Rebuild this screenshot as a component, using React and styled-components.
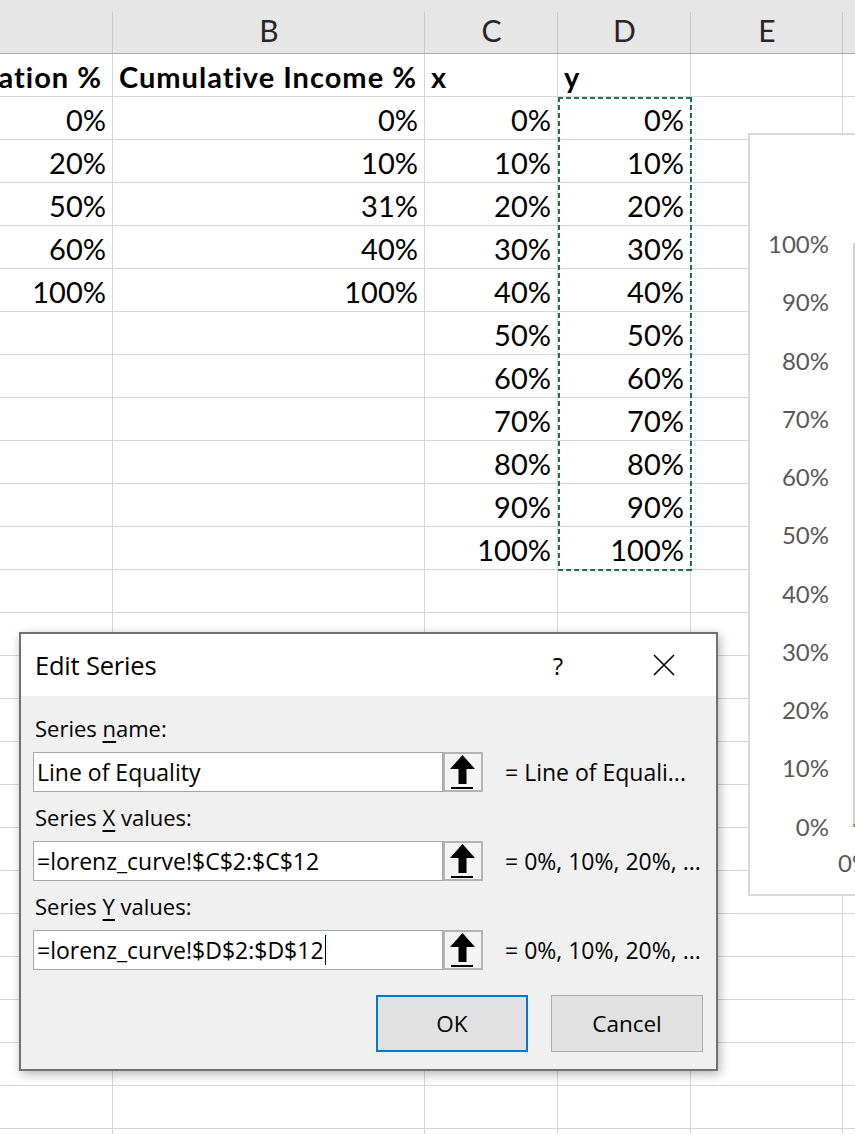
import React from 'react';
import styled, { createGlobalStyle } from 'styled-components';

const GlobalStyle = createGlobalStyle`
  html, body {
    margin: 0;
    padding: 0;
    overflow: hidden;
    background: #fff;
  }
`;

const columns = ['', 'B', 'C', 'D', 'E', ''];

const rows = [
  { bold: true, cells: ['Cumulative Population %', 'Cumulative Income %', 'x', 'y'] },
  { cells: ['0%', '0%', '0%', '0%'] },
  { cells: ['20%', '10%', '10%', '10%'] },
  { cells: ['50%', '31%', '20%', '20%'] },
  { cells: ['60%', '40%', '30%', '30%'] },
  { cells: ['100%', '100%', '40%', '40%'] },
  { cells: ['', '', '50%', '50%'] },
  { cells: ['', '', '60%', '60%'] },
  { cells: ['', '', '70%', '70%'] },
  { cells: ['', '', '80%', '80%'] },
  { cells: ['', '', '90%', '90%'] },
  { cells: ['', '', '100%', '100%'] },
];

const TOTAL_ROWS = 26;

const yLabels = ['100%', '90%', '80%', '70%', '60%', '50%', '40%', '30%', '20%', '10%', '0%'];

const Page = styled.div`
  position: relative;
  width: 855px;
  height: 1134px;
  overflow: hidden;
  background: #fff;
`;

const Sheet = styled.div`
  display: grid;
  grid-template-columns: 113px 312px 133px 133px 152px 1fr;
  grid-template-rows: 54px;
  grid-auto-rows: 43px;
`;

const HeaderCell = styled.div`
  position: relative;
  display: flex;
  justify-content: center;
  align-items: flex-end;
  padding-bottom: 4px;
  background: #e6e6e6;
  border-bottom: 1px solid #ababab;
  font-family: Lato, 'Liberation Sans', sans-serif;
  font-size: 30px;
  line-height: 38px;
  color: #262626;

  &::after {
    content: '';
    position: absolute;
    right: 0;
    top: 12px;
    bottom: 0;
    width: 1px;
    background: #c8c8c8;
  }
`;

const Cell = styled.div`
  display: flex;
  align-items: flex-end;
  justify-content: ${(p) => (p.$align === 'right' ? 'flex-end' : 'flex-start')};
  padding: 0 ${(p) => p.$padRight || 6}px 2px 6px;
  border-right: 1px solid #d6d6d6;
  border-bottom: 1px solid #d6d6d6;
  overflow: hidden;
  white-space: nowrap;
  font-family: Lato, 'Liberation Sans', sans-serif;
  font-size: 29px;
  line-height: 34px;
  font-weight: ${(p) => (p.$bold ? 700 : 400)};
  letter-spacing: ${(p) => (p.$bold ? '1px' : '0')};
  color: #000;
`;

const CopyMarquee = styled.div`
  position: absolute;
  left: 558px;
  top: 97px;
  width: 134px;
  height: 474px;
  background:
    repeating-linear-gradient(90deg, #217346 0 5px, transparent 5px 8px) top left / 100% 2px no-repeat,
    repeating-linear-gradient(90deg, #217346 0 5px, transparent 5px 8px) bottom left / 100% 2px no-repeat,
    repeating-linear-gradient(180deg, #217346 0 5px, transparent 5px 8px) top left / 2px 100% no-repeat,
    repeating-linear-gradient(180deg, #217346 0 5px, transparent 5px 8px) top right / 2px 100% no-repeat;
  pointer-events: none;
`;

const ChartFrame = styled.div`
  position: absolute;
  left: 748px;
  top: 133px;
  width: 160px;
  height: 763px;
  box-sizing: border-box;
  border: 2px solid #d9d9d9;
  background: #fff;
`;

const ChartSvg = styled.svg`
  display: block;
  overflow: visible;
  font-family: Lato, 'Liberation Sans', sans-serif;
  font-size: 24px;
`;

const Dialog = styled.div`
  position: absolute;
  left: 19px;
  top: 632px;
  width: 699px;
  height: 439px;
  box-sizing: border-box;
  display: flex;
  flex-direction: column;
  border: 2px solid #717171;
  background: #f0f0f0;
  box-shadow: 2px 3px 10px rgba(0, 0, 0, 0.3);
  font-family: 'Open Sans', 'Noto Sans', sans-serif;
  color: #000;
`;

const TitleBar = styled.div`
  height: 62px;
  display: flex;
  align-items: center;
  padding: 0 32px 0 14px;
  background: #fff;
`;

const Title = styled.div`
  flex: 1;
  font-size: 25.5px;
  letter-spacing: -0.2px;
`;

const TitleButton = styled.div`
  width: 40px;
  height: 40px;
  display: flex;
  align-items: center;
  justify-content: center;
  margin-left: ${(p) => p.$gap || 0}px;
  font-size: 24px;
`;

const Body = styled.div`
  flex: 1;
  display: flex;
  flex-direction: column;
  padding: 17px 13px 0 12px;
`;

const Field = styled.div`
  display: flex;
  flex-direction: column;
  gap: 8px;
  margin-bottom: 10px;
`;

const Label = styled.div`
  padding-left: 2px;
  font-size: 22px;
  line-height: 31px;

  u {
    text-underline-offset: 4px;
  }
`;

const FieldRow = styled.div`
  display: flex;
  align-items: center;
`;

const Input = styled.div`
  width: 410px;
  height: 40px;
  box-sizing: border-box;
  display: flex;
  align-items: center;
  padding-left: 3px;
  background: #fff;
  border: 1px solid #a6a6a6;
  font-size: 23px;
  white-space: nowrap;
`;

const Caret = styled.span`
  display: inline-block;
  width: 1.5px;
  height: 30px;
  margin-left: 1px;
  background: #000;
`;

const RefButton = styled.div`
  width: 40px;
  height: 40px;
  box-sizing: border-box;
  display: flex;
  align-items: center;
  justify-content: center;
  background: #f4f4f4;
  border: 2px solid #b4b4b4;
`;

const Preview = styled.div`
  margin-left: 22px;
  font-size: 23px;
  white-space: nowrap;
`;

const Actions = styled.div`
  display: flex;
  justify-content: flex-end;
  gap: 23px;
  margin-top: 15px;
`;

const ActionButton = styled.div`
  width: 152px;
  height: 57px;
  box-sizing: border-box;
  display: flex;
  align-items: center;
  justify-content: center;
  background: #e1e1e1;
  border: ${(p) => (p.$primary ? '2px solid #0078d7' : '1px solid #adadad')};
  font-size: 22.5px;
`;

const RefIcon = () => (
  <svg width="36" height="36" viewBox="2 2 36 36">
    <path d="M19.5 3 L32 17 L23.5 17 L23.5 32 L15.5 32 L15.5 17 L7 17 Z" fill="#000" />
    <rect x="8" y="35" width="22" height="2" fill="#000" />
  </svg>
);

const CloseIcon = () => (
  <svg width="22" height="22" viewBox="0 0 22 22">
    <path d="M1 1 L21 21 M21 1 L1 21" stroke="#000" strokeWidth="1.6" fill="none" />
  </svg>
);

const fields = [
  { label: <>Series <u>n</u>ame:</>, value: 'Line of Equality', preview: '= Line of Equali...' },
  { label: <>Series <u>X</u> values:</>, value: '=lorenz_curve!$C$2:$C$12', preview: '= 0%, 10%, 20%, ...' },
  { label: <>Series <u>Y</u> values:</>, value: '=lorenz_curve!$D$2:$D$12', preview: '= 0%, 10%, 20%, ...', focused: true },
];

const Chart = () => (
  <ChartFrame>
    <ChartSvg width="160" height="759">
      {yLabels.map((t, i) => (
        <text
          key={t}
          x="79"
          y={108.5 + i * 58.25}
          textAnchor="end"
          dominantBaseline="central"
          fill="#595959"
        >
          {t}
        </text>
      ))}
      <line x1="104" y1="108" x2="104" y2="691" stroke="#c4c4c4" strokeWidth="1.5" />
      <rect x="103" y="689" width="4" height="3" fill="#ed7d31" />
      <text x="88" y="727" dominantBaseline="central" fill="#595959">0%</text>
    </ChartSvg>
  </ChartFrame>
);

const App = () => {
  const allRows = Array.from({ length: TOTAL_ROWS }, (_, i) => rows[i] || { cells: [] });

  return (
    <Page>
      <GlobalStyle />
      <Sheet>
        {columns.map((c, i) => (
          <HeaderCell key={'h' + i}>{c}</HeaderCell>
        ))}
        {allRows.map((row, r) =>
          columns.map((_, c) => {
            const text = row.cells[c] || '';
            const isHeaderA = row.bold && c === 0;
            const align = row.bold && !isHeaderA ? 'left' : 'right';
            return (
              <Cell
                key={r + '-' + c}
                $align={align}
                $bold={row.bold}
                $padRight={isHeaderA ? 10 : 6}
              >
                {text}
              </Cell>
            );
          })
        )}
      </Sheet>

      <CopyMarquee />
      <Chart />

      <Dialog>
        <TitleBar>
          <Title>Edit Series</Title>
          <TitleButton>?</TitleButton>
          <TitleButton $gap={66}>
            <CloseIcon />
          </TitleButton>
        </TitleBar>
        <Body>
          {fields.map((f, i) => (
            <Field key={i}>
              <Label>{f.label}</Label>
              <FieldRow>
                <Input>
                  {f.value}
                  {f.focused && <Caret />}
                </Input>
                <RefButton>
                  <RefIcon />
                </RefButton>
                <Preview>{f.preview}</Preview>
              </FieldRow>
            </Field>
          ))}
          <Actions>
            <ActionButton $primary>OK</ActionButton>
            <ActionButton>Cancel</ActionButton>
          </Actions>
        </Body>
      </Dialog>
    </Page>
  );
};

export default App;
